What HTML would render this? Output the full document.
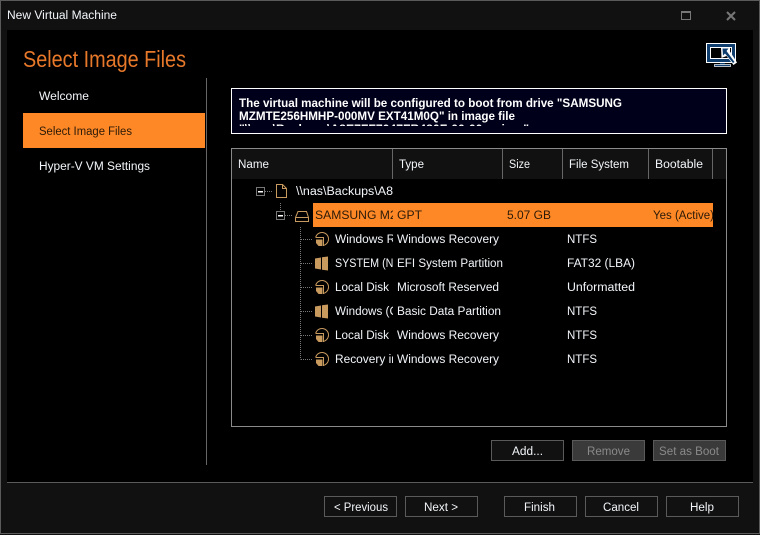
<!DOCTYPE html>
<html><head><meta charset="utf-8"><style>
html,body{margin:0;padding:0;background:#111;width:760px;height:535px;overflow:hidden}
svg{display:block}
text{font-family:"Liberation Sans",sans-serif;font-size:11.5px;fill:#f2f6fa}
.b{font-weight:bold;font-size:11.5px;fill:#fff}
.d{fill:#2a1a08}
.g{fill:#8a8a8a}
.btn{fill:#111;stroke:#5a5a5a}
.ic{fill:none;stroke:#c89a5e}
.dot{stroke:#777;stroke-dasharray:1 1;fill:none}
</style></head><body>
<svg width="760" height="535" viewBox="0 0 760 535" xmlns="http://www.w3.org/2000/svg">
<defs>
<clipPath id="c1"><rect x="232" y="100" width="161" height="300"/></clipPath>
<clipPath id="ci"><rect x="233" y="90" width="492" height="36"/></clipPath>
<clipPath id="cr"><rect x="393" y="200" width="320" height="30"/></clipPath>
<g id="vol"><circle cx="7" cy="7" r="6.5" class="ic"/><rect x="-1" y="5" width="10" height="10" fill="#000"/><path d="M0.500 5.500H8.500V14" class="ic"/><path d="M1 7.500H7.500V14H3.500L1 11Z" fill="#c89a5e"/></g>
<g id="win"><path d="M0 2L6 1V13L0 12Z M7 .7L13 0V14L7 13.300Z" fill="#c89a5e"/></g>
<g id="minus"><rect x=".5" y=".5" width="8" height="8" fill="#000" stroke="#777"/><rect x="2" y="4" width="5" height="1.500" fill="#fff"/></g>
</defs>
<rect width="760" height="535" fill="#111"/>
<rect x=".5" y=".5" width="759" height="533" fill="none" stroke="#5a5a5a"/>
<rect x="7" y="30" width="746" height="452" fill="#000"/>
<path d="M7 482.500H753" stroke="#5a5a5a"/>
<text x="7" y="19" textLength="110" lengthAdjust="spacingAndGlyphs">New Virtual Machine</text>
<rect x="681.500" y="11.500" width="9" height="8" fill="none" stroke="#777"/><path d="M682 12.500H690" stroke="#777"/>
<path d="M727 12L735 20M735 12L727 20" stroke="#777" stroke-width="2"/>

<text x="23" y="67" textLength="163" lengthAdjust="spacingAndGlyphs" style="font-size:23px;fill:#e8782a">Select Image Files</text>
<path d="M206.500 78V465" stroke="#666"/>
<text x="39" y="100" textLength="50" lengthAdjust="spacingAndGlyphs">Welcome</text>
<rect x="23" y="113" width="182" height="35" fill="#ff8826"/>
<text x="39" y="135" textLength="93" lengthAdjust="spacingAndGlyphs" class="d">Select Image Files</text>
<text x="39" y="170" textLength="111" lengthAdjust="spacingAndGlyphs">Hyper-V VM Settings</text>

<!-- top right icon -->
<rect x="706.500" y="43.500" width="29" height="19" fill="#0f3e6e" stroke="#fff"/>
<rect x="710.500" y="47.500" width="21" height="11" fill="#000" stroke="#fff"/>
<rect x="720" y="63" width="5" height="2" fill="#0f3e6e"/>
<rect x="714.500" y="64.500" width="16" height="2" fill="#0f3e6e" stroke="#fff" stroke-width=".7"/>
<path d="M721 47H730V51.500L737 62.500L733.500 65L726.500 56L721.500 58Z" fill="#fff"/>
<path d="M722.500 48.500H728.500L726.500 51L734.500 62L733 63L725 53.500L723 55.500Z" fill="#0f3e6e"/>

<!-- info box -->
<rect x="231.500" y="88.500" width="495" height="45" fill="#00001a" stroke="#fff"/>
<g clip-path="url(#ci)">
<text class="b" x="239" y="107" textLength="383" lengthAdjust="spacingAndGlyphs">The virtual machine will be configured to boot from drive "SAMSUNG</text>
<text class="b" x="239" y="120" textLength="276" lengthAdjust="spacingAndGlyphs">MZMTE256HMHP-000MV EXT41M0Q" in image file</text>
<text class="b" x="239" y="133" textLength="290" lengthAdjust="spacingAndGlyphs">"\\nas\Backups\A8E7FF7047FB480F-00-00.mrimg"</text>
</g>

<!-- table -->
<rect x="231.500" y="148.500" width="495" height="278" fill="#000" stroke="#8a8a8a"/>
<rect x="232" y="149" width="494" height="30" fill="#111"/>
<path d="M392.500 149V179M502.500 149V179M562.500 149V179M648.500 149V179M712.500 149V179" stroke="#666"/>
<text x="238" y="168" textLength="31" lengthAdjust="spacingAndGlyphs">Name</text>
<text x="399" y="168" textLength="25" lengthAdjust="spacingAndGlyphs">Type</text>
<text x="509" y="168" textLength="21" lengthAdjust="spacingAndGlyphs">Size</text>
<text x="569" y="168" textLength="60" lengthAdjust="spacingAndGlyphs">File System</text>
<text x="655" y="168" textLength="48" lengthAdjust="spacingAndGlyphs">Bootable</text>

<rect x="313" y="203" width="400" height="24" fill="#ff8826"/>

<!-- tree lines -->
<path class="dot" d="M265 191.500H272M280.500 203V210M285 215.500H292M300.500 227V359.500M301 239.500H312M301 263.500H312M301 287.500H312M301 311.500H312M301 335.500H312M301 359.500H312"/>
<use href="#minus" x="256" y="187"/>
<use href="#minus" x="276" y="211"/>
<path class="ic" d="M276.500 184.500H282.500L286.500 188.500V197.500H276.500Z M282.500 184.500V188.500H286.500"/>
<path class="ic" d="M298 211.500H306.500L308.500 217.500V221.500H295.500V217.500Z M295.500 217.500H308.500"/>
<use href="#vol" x="315" y="232"/>
<use href="#win" x="315" y="256.500"/>
<use href="#vol" x="315" y="280"/>
<use href="#win" x="315" y="304.500"/>
<use href="#vol" x="315" y="328"/>
<use href="#vol" x="315" y="352"/>

<text x="296" y="195" textLength="97" lengthAdjust="spacingAndGlyphs">\\nas\Backups\A8</text>
<g clip-path="url(#c1)">
<text x="315" y="219" class="d" textLength="110" lengthAdjust="spacingAndGlyphs">SAMSUNG M2 SSD</text>
<text x="335" y="243" textLength="102" lengthAdjust="spacingAndGlyphs">Windows Recovery</text>
<text x="335" y="267" textLength="84" lengthAdjust="spacingAndGlyphs">SYSTEM (NVMe)</text>
<text x="335" y="291" textLength="93" lengthAdjust="spacingAndGlyphs">Local Disk (None)</text>
<text x="335" y="315" textLength="70" lengthAdjust="spacingAndGlyphs">Windows (C:)</text>
<text x="335" y="339" textLength="93" lengthAdjust="spacingAndGlyphs">Local Disk (None)</text>
<text x="335" y="363" textLength="86" lengthAdjust="spacingAndGlyphs">Recovery image</text>
</g>
<text x="397" y="219" class="d" textLength="25" lengthAdjust="spacingAndGlyphs">GPT</text>
<text x="507" y="219" class="d" textLength="44" lengthAdjust="spacingAndGlyphs">5.07 GB</text>
<g clip-path="url(#cr)"><text x="653" y="219" class="d" textLength="61" lengthAdjust="spacingAndGlyphs">Yes (Active)</text></g>
<text x="397" y="243" textLength="102" lengthAdjust="spacingAndGlyphs">Windows Recovery</text>
<text x="397" y="267" textLength="106" lengthAdjust="spacingAndGlyphs">EFI System Partition</text>
<text x="397" y="291" textLength="102" lengthAdjust="spacingAndGlyphs">Microsoft Reserved</text>
<text x="397" y="315" textLength="104" lengthAdjust="spacingAndGlyphs">Basic Data Partition</text>
<text x="397" y="339" textLength="102" lengthAdjust="spacingAndGlyphs">Windows Recovery</text>
<text x="397" y="363" textLength="102" lengthAdjust="spacingAndGlyphs">Windows Recovery</text>
<text x="567" y="243" textLength="30" lengthAdjust="spacingAndGlyphs">NTFS</text>
<text x="567" y="267" textLength="68" lengthAdjust="spacingAndGlyphs">FAT32 (LBA)</text>
<text x="567" y="291" textLength="68" lengthAdjust="spacingAndGlyphs">Unformatted</text>
<text x="567" y="315" textLength="30" lengthAdjust="spacingAndGlyphs">NTFS</text>
<text x="567" y="339" textLength="30" lengthAdjust="spacingAndGlyphs">NTFS</text>
<text x="567" y="363" textLength="30" lengthAdjust="spacingAndGlyphs">NTFS</text>

<!-- buttons -->
<rect class="btn" x="491.500" y="440.500" width="72" height="20"/>
<text x="512" y="455" textLength="31" lengthAdjust="spacingAndGlyphs">Add...</text>
<rect x="572.500" y="440.500" width="72" height="20" fill="#3a3a3a" stroke="#5a5a5a"/>
<text x="587" y="455" class="g" textLength="43" lengthAdjust="spacingAndGlyphs">Remove</text>
<rect x="653.500" y="440.500" width="72" height="20" fill="#3a3a3a" stroke="#5a5a5a"/>
<text x="659" y="455" class="g" textLength="60" lengthAdjust="spacingAndGlyphs">Set as Boot</text>

<rect class="btn" x="324.500" y="496.500" width="72" height="20"/>
<text x="334" y="511" textLength="54" lengthAdjust="spacingAndGlyphs">&lt; Previous</text>
<rect class="btn" x="405.500" y="496.500" width="72" height="20"/>
<text x="424" y="511" textLength="34" lengthAdjust="spacingAndGlyphs">Next &gt;</text>
<rect class="btn" x="504.500" y="496.500" width="72" height="20"/>
<text x="524" y="511" textLength="31" lengthAdjust="spacingAndGlyphs">Finish</text>
<rect class="btn" x="585.500" y="496.500" width="72" height="20"/>
<text x="603" y="511" textLength="36" lengthAdjust="spacingAndGlyphs">Cancel</text>
<rect class="btn" x="666.500" y="496.500" width="72" height="20"/>
<text x="690" y="511" textLength="24" lengthAdjust="spacingAndGlyphs">Help</text>
</svg>
</body></html>
